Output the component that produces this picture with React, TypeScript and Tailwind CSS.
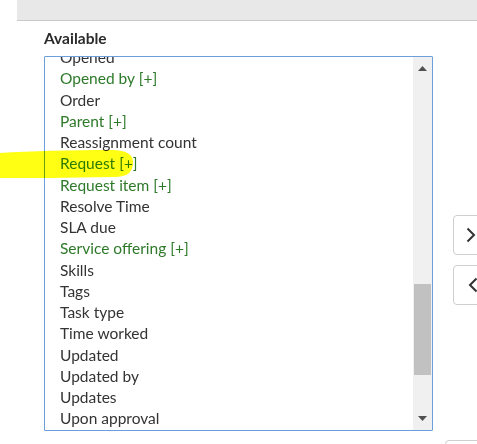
import { memo } from 'react';

interface FieldItem {
  label: string;
  reference?: boolean;
}

const fields: FieldItem[] = [
  { label: 'Opened' },
  { label: 'Opened by [+]', reference: true },
  { label: 'Order' },
  { label: 'Parent [+]', reference: true },
  { label: 'Reassignment count' },
  { label: 'Request [+]', reference: true },
  { label: 'Request item [+]', reference: true },
  { label: 'Resolve Time' },
  { label: 'SLA due' },
  { label: 'Service offering [+]', reference: true },
  { label: 'Skills' },
  { label: 'Tags' },
  { label: 'Task type' },
  { label: 'Time worked' },
  { label: 'Updated' },
  { label: 'Updated by' },
  { label: 'Updates' },
  { label: 'Upon approval' },
];

const Scrollbar = memo(function Scrollbar() {
  return (
    <div className="flex flex-col w-[19px] shrink-0 bg-[#f0f0f0]">
      <div className="h-[20px] flex items-center justify-center pt-[2px]">
        <svg width="9" height="5" viewBox="0 0 9 5">
          <path d="M0 5 L4.5 0 L9 5 Z" fill="#505050" />
        </svg>
      </div>
      <div className="flex-1 flex flex-col px-[1px]">
        <div className="h-[207px]" />
        <div className="h-[91px] bg-[#c1c1c1]" />
      </div>
      <div className="h-[20px] flex items-center justify-center pb-[4px]">
        <svg width="9" height="5" viewBox="0 0 9 5">
          <path d="M0 0 L9 0 L4.5 5 Z" fill="#505050" />
        </svg>
      </div>
    </div>
  );
});

function Highlight() {
  return (
    <svg
      className="absolute left-0 top-[148px] mix-blend-multiply pointer-events-none"
      width="136"
      height="32"
      viewBox="0 0 136 32">
      <path
        d="M0 5 C30 3 70 2 112 2 C127 2 134 7 133 16 C132 27 124 29 112 29 C70 30 30 30 0 30 Z"
        fill="#ffff14"
      />
    </svg>
  );
}

export default function App() {
  return (
    <div
      className="relative w-[477px] h-[444px] overflow-hidden bg-white text-[#333]"
      style={{ fontFamily: 'Lato, "Noto Sans", sans-serif' }}>
      <div className="ml-[17px] h-[21px] bg-[#e8e8e8] border-b border-[#c9c9c9]" />

      <div className="flex flex-row pl-[44px] pt-[8px]">
        <div className="flex flex-col w-[389px] shrink-0">
          <p className="text-[15.5px] font-bold leading-[19px] text-[#2b2b2b]">Available</p>
          <div className="mt-[8px] h-[375px] flex flex-row border border-[#6a9fdc] rounded-[1px] overflow-hidden">
            <div className="flex-1 overflow-hidden pl-[15px]">
              <ul className="-mt-[10px]">
                {fields.map((f) => (
                  <li
                    key={f.label}
                    className={`text-[15.5px] leading-[21.25px] whitespace-nowrap ${
                      f.reference ? 'text-[#2e7a2a]' : 'text-[#333]'
                    }`}>
                    {f.label}
                  </li>
                ))}
              </ul>
            </div>
            <Scrollbar />
          </div>
        </div>

        <div className="flex flex-col gap-[10px] ml-[20px] pt-[186px] shrink-0">
          <button className="w-[40px] h-[40px] border border-[#cfcfcf] rounded-[4px] bg-white flex items-center pl-[12px]">
            <svg width="10" height="16" viewBox="0 0 10 16">
              <path d="M1.5 1.5 L8 8 L1.5 14.5" fill="none" stroke="#333" strokeWidth="2" />
            </svg>
          </button>
          <button className="w-[40px] h-[40px] border border-[#cfcfcf] rounded-[4px] bg-white flex items-center pl-[14px]">
            <svg width="10" height="16" viewBox="0 0 10 16">
              <path d="M8.5 1.5 L2 8 L8.5 14.5" fill="none" stroke="#333" strokeWidth="2" />
            </svg>
          </button>
        </div>
      </div>

      <div className="absolute left-[445px] top-[440px] w-[50px] h-[30px] border border-[#cfcfcf] rounded-[4px]" />

      <Highlight />
    </div>
  );
}
